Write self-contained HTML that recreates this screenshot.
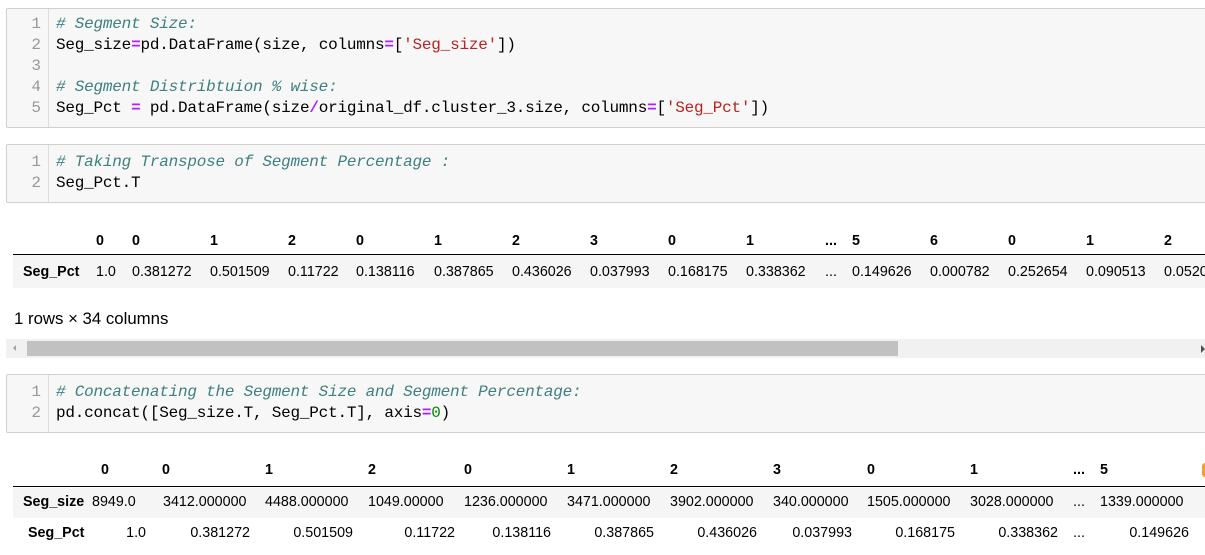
<!DOCTYPE html>
<html><head><meta charset="utf-8"><style>
*{margin:0;padding:0;box-sizing:border-box}
body{width:1205px;height:555px;overflow:hidden;background:#fff;position:relative;font-family:"Liberation Sans",Arial,sans-serif}
.cell{position:absolute;left:6px;width:1205px;background:#f7f7f7;border:1px solid #cfcfcf;border-radius:2px}
.gut{position:absolute;left:0;top:0;bottom:0;width:42px;border-right:1px solid #ddd}
.ln{position:absolute;left:0;width:34px;text-align:right;color:#999;font:16px/21px "Liberation Mono",monospace}
.cd{position:absolute;left:49px;white-space:pre;color:#000;font:16px/21px "Liberation Mono",monospace;letter-spacing:-0.22px}
.c{color:#408080;font-style:italic}
.o{color:#aa22ff;font-weight:bold}
.s{color:#ba2121}
.n{color:#008800}
.t{position:absolute;font-size:14.3px;white-space:pre;color:#000;line-height:16px}
.b{font-weight:bold}
.r{text-align:right}
.band{position:absolute;background:#f5f5f5}
.hl{position:absolute;height:1px;background:#000}
</style></head><body>

<div class="cell" style="top:8px;height:120px"><div class="gut"></div>
<div class="ln" style="top:5px">1<br>2<br>3<br>4<br>5</div>
<div class="cd" style="top:5px"><span class="c"># Segment Size:</span>
Seg_size<span class="o">=</span>pd.DataFrame(size, columns<span class="o">=</span>[<span class="s">'Seg_size'</span>])

<span class="c"># Segment Distribtuion % wise:</span>
Seg_Pct <span class="o">=</span> pd.DataFrame(size<span class="o">/</span>original_df.cluster_3.size, columns<span class="o">=</span>[<span class="s">'Seg_Pct'</span>])</div>
</div>

<div class="cell" style="top:144px;height:59px"><div class="gut"></div>
<div class="ln" style="top:7px">1<br>2</div>
<div class="cd" style="top:7px"><span class="c"># Taking Transpose of Segment Percentage :</span>
Seg_Pct.T</div>
</div>

<div class="band" style="left:13px;top:255px;width:1192px;height:33px"></div>
<div class="hl" style="left:13px;top:254px;width:1192px"></div>
<div id="t1"></div>

<div class="t" style="left:14px;top:309px;font-size:16.8px;line-height:20px">1 rows × 34 columns</div>
<div style="position:absolute;left:6px;top:339px;width:1199px;height:19px;background:#f1f1f1"></div>
<div style="position:absolute;left:27px;top:341px;width:871px;height:15px;background:#c1c1c1"></div>
<div style="position:absolute;left:13px;top:345px;width:0;height:0;border-top:3px solid transparent;border-bottom:3px solid transparent;border-right:3px solid #a3a3a3"></div>
<div style="position:absolute;left:1201px;top:345px;width:0;height:0;border-top:4px solid transparent;border-bottom:4px solid transparent;border-left:4px solid #505050"></div>

<div class="cell" style="top:374px;height:59px"><div class="gut"></div>
<div class="ln" style="top:7px">1<br>2</div>
<div class="cd" style="top:7px"><span class="c"># Concatenating the Segment Size and Segment Percentage:</span>
pd.concat([Seg_size.T, Seg_Pct.T], axis<span class="o">=</span><span class="n">0</span>)</div>
</div>

<div class="band" style="left:13px;top:488px;width:1192px;height:30px"></div>
<div class="hl" style="left:13px;top:486px;width:1192px"></div>
<div id="t2"></div>

<script>
function put(id,items){var h='';items.forEach(function(i){h+='<div class="t '+(i[3]||'')+'" style="'+(i[3]&&i[3].indexOf('r')>=0?'right:'+(1205-i[0]):'left:'+i[0])+'px;top:'+i[1]+'px">'+i[2]+'</div>';});document.getElementById(id).innerHTML=h;}
var a=[];
var hx=[96,132,210,288,356,434,512,590,668,746,825,852,930,1008,1086,1164];
var hh=['0','0','1','2','0','1','2','3','0','1','...','5','6','0','1','2'];
var vv=['1.0','0.381272','0.501509','0.11722','0.138116','0.387865','0.436026','0.037993','0.168175','0.338362','...','0.149626','0.000782','0.252654','0.090513','0.0520'];
hx.forEach(function(x,i){a.push([x,233,hh[i],'b']);a.push([x,264,vv[i],'']);});
a.push([23,264,'Seg_Pct','b']);
put('t1',a);
var b=[];
var h2=[101,162,265,368,464,567,670,773,867,970,1073,1100];
var hh2=['0','0','1','2','0','1','2','3','0','1','...','5'];
var r1=['8949.0','3412.000000','4488.000000','1049.00000','1236.000000','3471.000000','3902.000000','340.000000','1505.000000','3028.000000','...','1339.000000'];
var r1x=[92,163,265,368,464,567,670,773,867,970,1073,1100];
var r2=['1.0','0.381272','0.501509','0.11722','0.138116','0.387865','0.436026','0.037993','0.168175','0.338362','...','0.149626'];
var r2e=[146,250,353,455,551,654,757,852,955,1058,1085,1189];
h2.forEach(function(x,i){b.push([x,462,hh2[i],'b']);b.push([r1x[i],494,r1[i],'']);b.push([r2e[i],525,r2[i],'r']);});
b.push([23,494,'Seg_size','b']);b.push([28,525,'Seg_Pct','b']);
put('t2',b);
</script>
<div style="position:absolute;left:1202px;top:463px;width:3px;height:14px;background:#f0a030;border-radius:3px 0 0 3px"></div>
</body></html>
